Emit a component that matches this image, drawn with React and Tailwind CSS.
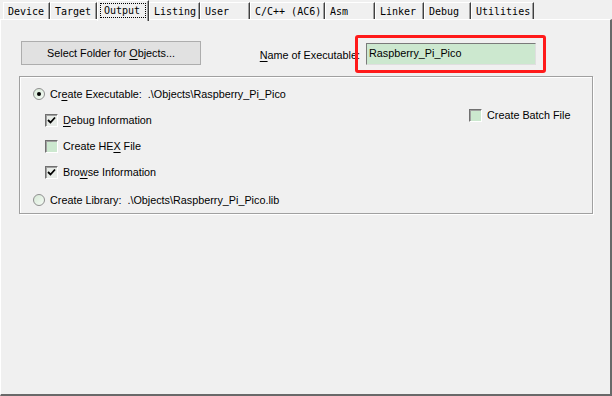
const tabs = [
  { label: "Device", w: 47 },
  { label: "Target", w: 47 },
  { label: "Output", w: 52, active: true },
  { label: "Listing", w: 51 },
  { label: "User", w: 50 },
  { label: "C/C++ (AC6)", w: 75 },
  { label: "Asm", w: 50 },
  { label: "Linker", w: 49 },
  { label: "Debug", w: 47 },
  { label: "Utilities", w: 63 },
];

const U = ({ children }) => <span className="underline underline-offset-[2px]">{children}</span>;

const Radio = ({ checked }) => (
  <span className="relative w-[12px] h-[12px] rounded-full border border-[#8f8f8f] bg-gradient-to-br from-[#d6e8d6] to-[#f4fbf4] flex items-center justify-center shrink-0">
    {checked && <span className="w-[4px] h-[4px] rounded-full bg-black" />}
  </span>
);

const Check = ({ checked, green }) => (
  <span
    className={`w-[13px] h-[13px] border border-t-[#707070] border-l-[#707070] border-r-white border-b-white shadow-[inset_1px_1px_0_#a0a0a0] flex items-center justify-center shrink-0 ${
      green ? "bg-[#cce8cf]" : "bg-[#e8ece8]"
    }`}
  >
    {checked && (
      <svg width="9" height="9" viewBox="0 0 9 9">
        <path d="M1 4 L3.5 6.5 L8 1.5" stroke="#000" strokeWidth="1.8" fill="none" />
      </svg>
    )}
  </span>
);

export default function App() {
  return (
    <div
      className="w-[612px] h-[396px] bg-[#f0f0f0] overflow-hidden flex flex-col text-black"
      style={{ fontFamily: '"Liberation Sans", Arial, sans-serif' }}
    >
      {/* tab strip */}
      <div className="h-[19px] flex items-end pl-[3px] relative z-10" style={{ fontFamily: '"DejaVu Sans Mono", monospace' }}>
        {tabs.map((t) =>
          t.active ? (
            <div
              key={t.label}
              style={{ width: t.w }}
              className="h-[21px] -mb-[2px] bg-[#f0f0f0] border-l border-t border-white border-r border-r-[#404040] shadow-[inset_-1px_0_0_#a0a0a0] pt-[2px] px-[2px]"
            >
              <div className="border border-dotted border-black h-[15px] text-[10px] leading-[13px] pl-[3px]">{t.label}</div>
            </div>
          ) : (
            <div
              key={t.label}
              style={{ width: t.w }}
              className="h-[17px] border-l border-t border-white border-r border-r-[#404040] shadow-[inset_-1px_0_0_#a0a0a0] text-[10px] leading-[18px] pl-[4px] whitespace-nowrap overflow-hidden"
            >
              {t.label}
            </div>
          )
        )}
      </div>

      {/* panel */}
      <div className="flex-1 border-t border-l border-white border-r-2 border-b-2 border-r-[#696969] border-b-[#696969] pt-[21px] pl-[18px]">
        <div className="flex items-center h-[24px] text-[10.8px]">
          <button className="ml-[2px] w-[180px] h-[24px] bg-[#e1e1e1] border border-[#adadad] text-[10.8px]">
            Select Folder for <U>O</U>bjects...
          </button>
          <span className="ml-[53px] w-[106px] text-right mt-[4px] whitespace-nowrap">
            <U>N</U>ame of Executable:
          </span>
          <div className="relative ml-[6px] mt-[1px]">
            <div className="w-[170px] h-[22px] bg-[#cce8cf] border border-t-[#7a7a7a] border-l-[#7a7a7a] border-r-[#dfdfdf] border-b-[#dfdfdf] pl-[2px] leading-[18px]">
              Raspberry_Pi_Pico
            </div>
            <div className="absolute -left-[11px] -right-[10px] -top-[8px] -bottom-[8px] border-[3px] border-[#ff1a1a] rounded-[3px]" />
          </div>
        </div>

        <div className="mt-[11px] w-[574px] h-[138px] border border-[#a0a0a0] shadow-[1px_1px_0_white,inset_1px_1px_0_white] flex text-[10.8px]">
          <div className="flex-1 pl-[13px] pt-[10px] flex flex-col">
            <div className="flex items-center gap-[5px] h-[14px]">
              <Radio checked />
              <span>
                Cr<U>e</U>ate Executable:&nbsp; .\Objects\Raspberry_Pi_Pico
              </span>
            </div>
            <div className="flex items-center gap-[5px] h-[14px] mt-[12px] ml-[12px]">
              <Check checked />
              <span>
                <U>D</U>ebug Information
              </span>
            </div>
            <div className="flex items-center gap-[5px] h-[14px] mt-[12px] ml-[12px]">
              <Check green />
              <span>
                Create HE<U>X</U> File
              </span>
            </div>
            <div className="flex items-center gap-[5px] h-[14px] mt-[12px] ml-[12px]">
              <Check checked />
              <span>
                Bro<U>w</U>se Information
              </span>
            </div>
            <div className="flex items-center gap-[5px] h-[14px] mt-[14px]">
              <Radio />
              <span>Create Library:&nbsp; .\Objects\Raspberry_Pi_Pico.lib</span>
            </div>
          </div>
          <div className="w-[123px] pt-[31px]">
            <div className="flex items-center gap-[5px] h-[14px]">
              <Check green />
              <span>Create Batch File</span>
            </div>
          </div>
        </div>
      </div>
    </div>
  );
}
